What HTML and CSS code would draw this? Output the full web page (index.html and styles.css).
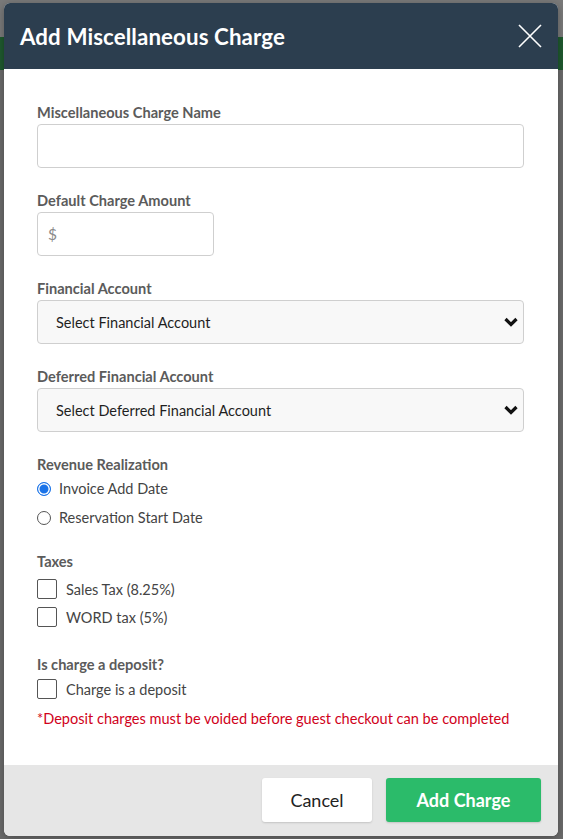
FILE: index.html
```html
<!DOCTYPE html>
<html lang="en">
<head>
    <meta charset="UTF-8" />
    <meta name="viewport" content="width=device-width, initial-scale=1.0" />
    <title>Add Miscellaneous Charge</title>
    <link rel="stylesheet" href="styles.css">
</head>
<body>
    <div class="modal">
        <div class="modal-header">
            <h1>Add Miscellaneous Charge</h1>
            <button type="button" class="close" aria-label="Close">
                <svg width="24" height="24" viewBox="0 0 24 24">
                    <path d="M1 1 L23 23 M23 1 L1 23" stroke="#fff" stroke-width="1.6" fill="none" />
                </svg>
            </button>
        </div>

        <form class="modal-body">
            <label class="field-label" for="chargeName">Miscellaneous Charge Name</label>
            <input type="text" id="chargeName" class="text-input" />

            <label class="field-label" for="amount">Default Charge Amount</label>
            <input type="text" id="amount" class="text-input amount" placeholder="$" />

            <label class="field-label">Financial Account</label>
            <div class="select-box">
                <span>Select Financial Account</span>
                <svg width="16" height="12" viewBox="0 0 16 12"><path d="M2.5 3 L8 8.5 L13.5 3" stroke="#111" stroke-width="3.2" fill="none" /></svg>
            </div>

            <label class="field-label">Deferred Financial Account</label>
            <div class="select-box">
                <span>Select Deferred Financial Account</span>
                <svg width="16" height="12" viewBox="0 0 16 12"><path d="M2.5 3 L8 8.5 L13.5 3" stroke="#111" stroke-width="3.2" fill="none" /></svg>
            </div>

            <div class="group-label">Revenue Realization</div>
            <div class="option-row">
                <span class="radio checked"></span>
                <span>Invoice Add Date</span>
            </div>
            <div class="option-row">
                <span class="radio"></span>
                <span>Reservation Start Date</span>
            </div>

            <div class="group-label taxes">Taxes</div>
            <div class="option-row check-row">
                <span class="checkbox"></span>
                <span>Sales Tax (8.25%)</span>
            </div>
            <div class="option-row check-row">
                <span class="checkbox"></span>
                <span>WORD tax (5%)</span>
            </div>

            <div class="group-label deposit">Is charge a deposit?</div>
            <div class="option-row check-row">
                <span class="checkbox"></span>
                <span>Charge is a deposit</span>
            </div>
            <p class="note">*Deposit charges must be voided before guest checkout can be completed</p>
        </form>

        <div class="modal-footer">
            <button type="button" class="btn btn-cancel">Cancel</button>
            <button type="button" class="btn btn-add">Add Charge</button>
        </div>
    </div>
</body>
</html>
```

FILE: styles.css
```css
/* Dimmed page behind the dialog */
body {
    margin: 0;
    height: 839px;
    overflow: hidden;
    font-family: Lato, 'Open Sans', sans-serif;
    background: linear-gradient(to bottom, #7a7a7a 0, #7a7a7a 37px, #1f5a2f 37px, #1f5a2f 70px, #6b6b6b 70px);
}

/* Dialog */
.modal {
    width: 554px;
    margin: 3px 0 0 4px;
    background-color: #fff;
    border-radius: 6px;
    overflow: hidden;
    box-shadow: 0 2px 8px rgba(0, 0, 0, 0.3);
}

.modal-header {
    height: 66px;
    background-color: #2c3e4f;
    display: flex;
    align-items: center;
    justify-content: space-between;
    padding: 0 16px 0 16px;
}

.modal-header h1 {
    margin: 0;
    color: #fff;
    font-size: 22.3px;
    font-weight: 700;
    letter-spacing: 0.1px;
}

.close {
    background: none;
    border: none;
    padding: 0;
    width: 24px;
    height: 24px;
    cursor: pointer;
}

/* Form body */
.modal-body {
    display: flex;
    flex-direction: column;
    align-items: flex-start;
    padding: 35px 34px 38px 33px;
}

.field-label,
.group-label {
    font-size: 14.6px;
    line-height: 17px;
    font-weight: 700;
    color: #5b5b5b;
    margin-bottom: 3px;
}

.text-input {
    box-sizing: border-box;
    width: 100%;
    height: 44px;
    margin: 0 0 24px;
    padding: 0 10px;
    border: 1px solid #cfcfcf;
    border-radius: 4px;
    font-family: inherit;
    font-size: 15.5px;
}

.text-input.amount {
    width: 177px;
}

.text-input::placeholder {
    color: #8a8a8a;
}

.select-box {
    box-sizing: border-box;
    width: 100%;
    height: 44px;
    margin-bottom: 24px;
    padding: 0 4px 0 18px;
    display: flex;
    align-items: center;
    justify-content: space-between;
    background-color: #f8f8f8;
    border: 1px solid #cfcfcf;
    border-radius: 4px;
    font-size: 14.5px;
    color: #1f1f1f;
}

.group-label {
    margin-bottom: 1px;
}

.group-label.taxes {
    margin-top: 21px;
    margin-bottom: 5px;
}

.group-label.deposit {
    margin-top: 25px;
    margin-bottom: 2px;
}

/* Radio and checkbox rows */
.option-row {
    display: flex;
    align-items: center;
    height: 29px;
    font-size: 14.5px;
    color: #444;
}

.check-row {
    height: 28px;
}

.radio {
    box-sizing: border-box;
    width: 14px;
    height: 14px;
    margin-right: 8px;
    border: 1.5px solid #555;
    border-radius: 50%;
}

.radio.checked {
    border: 1.5px solid #1a73e8;
    background-color: #1a73e8;
    box-shadow: inset 0 0 0 1.5px #fff;
}

.checkbox {
    box-sizing: border-box;
    width: 20px;
    height: 20px;
    margin-right: 9px;
    border: 1px solid #555;
    border-radius: 2px;
}

.note {
    margin: 7px 0 0;
    font-size: 14.55px;
    line-height: 17px;
    color: #d0021b;
}

/* Footer */
.modal-footer {
    height: 71px;
    background-color: #e6e6e6;
    display: flex;
    justify-content: flex-end;
    align-items: flex-start;
    gap: 14px;
    padding: 13px 17px 0 0;
    box-sizing: border-box;
}

.btn {
    height: 44px;
    border: none;
    border-radius: 3px;
    font-family: inherit;
    font-size: 18px;
    cursor: pointer;
    box-shadow: 0 1px 2px rgba(0, 0, 0, 0.15);
}

.btn-cancel {
    width: 110px;
    background-color: #fff;
    color: #222;
    font-weight: 400;
}

.btn-add {
    width: 155px;
    background-color: #2bbb6a;
    color: #fff;
    font-weight: 700;
}
```
